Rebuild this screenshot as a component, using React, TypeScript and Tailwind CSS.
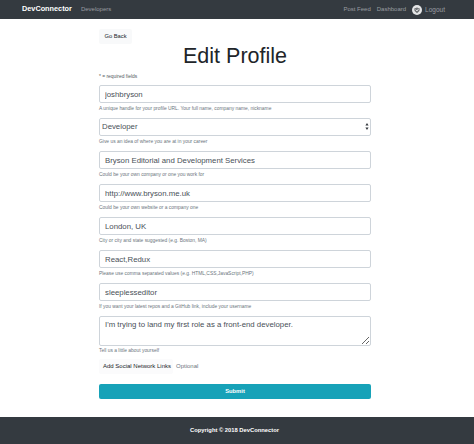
import React from 'react';

const fields = [
  { value: 'Bryson Editorial and Development Services', help: 'Could be your own company or one you work for' },
  { value: 'http://www.bryson.me.uk', help: 'Could be your own website or a company one' },
  { value: 'London, UK', help: 'City or city and state suggested (e.g. Boston, MA)' },
  { value: 'React,Redux', help: 'Please use comma separated values (e.g. HTML,CSS,JavaScript,PHP)' },
  { value: 'sleeplesseditor', help: 'If you want your latest repos and a GitHub link, include your username' },
];

const inputClass =
  'block w-full h-[18px] rounded-[2px] border border-[#ced4da] bg-white px-[5px] text-[7.8px] text-[#495057] outline-none';

const Help: React.FC<{ text: string }> = ({ text }) => (
  <p className="mt-[1px] h-[14px] text-[4.9px] leading-[9px] text-[#6c757d]">{text}</p>
);

const App: React.FC = () => {
  return (
    <div className="flex min-h-[444px] flex-col bg-white font-['Liberation_Sans',Arial,sans-serif] text-[#212529]">
      {/* Navbar */}
      <nav className="flex h-[19px] items-center justify-between bg-[#343a40] pl-[22px] pr-[29px]">
        <div className="flex items-center gap-[9px]">
          <span className="text-[7.3px] font-bold text-white">DevConnector</span>
          <span className="text-[6px] text-[#9a9da1]">Developers</span>
        </div>
        <div className="flex items-center text-[6px] text-[#9a9da1]">
          <span>Post Feed</span>
          <span className="ml-[6px]">Dashboard</span>
          <svg className="ml-[6px]" width="10" height="10" viewBox="0 0 10 10">
            <circle cx="5" cy="5" r="5" fill="#e4e5e6" />
            <path d="M2.2 3.6 L5 2.4 L7.8 3.6 L7.4 6 L5 8.2 L2.6 6 Z" fill="#6f7275" />
            <path d="M3.6 4.6 L5 6 L6.6 3.8" stroke="#e4e5e6" strokeWidth="0.9" fill="none" />
          </svg>
          <span className="ml-[3px] text-[6.5px]">Logout</span>
        </div>
      </nav>

      {/* Form */}
      <main className="ml-[99px] w-[272px] flex-1">
        <button className="mt-[10px] block h-[15px] w-[33px] rounded-[2px] bg-[#f8f9fa] text-[5.8px] text-[#212529]">
          Go Back
        </button>
        <h1 className="mt-[1px] text-center text-[21.5px] leading-[22px] text-[#212529]">Edit Profile</h1>
        <p className="mt-[6px] h-[12px] text-[4.9px] leading-[8px] text-[#555b61]">* = required fields</p>

        <input className={inputClass} defaultValue="joshbryson" readOnly />
        <Help text="A unique handle for your profile URL. Your full name, company name, nickname" />

        <div className="relative">
          <select className={`${inputClass} appearance-none !px-[2px]`} defaultValue="Developer">
            <option>Developer</option>
          </select>
          <svg className="absolute right-[2px] top-[5px]" width="4" height="7" viewBox="0 0 4 7">
            <path d="M2 0 L3.6 2.6 H0.4 Z M2 7 L0.4 4.4 H3.6 Z" fill="#33383d" />
          </svg>
        </div>
        <Help text="Give us an idea of where you are at in your career" />

        {fields.map((field) => (
          <div key={field.help}>
            <input className={inputClass} defaultValue={field.value} readOnly />
            <Help text={field.help} />
          </div>
        ))}

        <textarea
          className="block h-[30px] w-full rounded-[2px] border border-[#ced4da] bg-white px-[5px] py-[3px] text-[7.8px] leading-[10px] text-[#495057] outline-none"
          defaultValue="I'm trying to land my first role as a front-end developer."
          readOnly
        />
        <p className="mt-[1px] text-[4.9px] leading-[8px] text-[#6c757d]">Tell us a little about yourself</p>

        <div className="mt-[4px] flex h-[15px] items-center text-[6px]">
          <button className="h-[15px] rounded-[2px] bg-[#fbfbfc] pl-[4px] pr-[2px] text-[#212529]">
            Add Social Network Links
          </button>
          <span className="ml-[3px] text-[#6c757d]">Optional</span>
        </div>

        <button className="mt-[10px] block h-[15px] w-full rounded-[2px] bg-[#17a2b8] text-[5.8px] font-bold text-white">
          Submit
        </button>
      </main>

      {/* Footer */}
      <footer className="flex h-[27px] items-center justify-center bg-[#343a40] pr-[5px] text-[5.8px] font-bold text-white">
        Copyright © 2018 DevConnector
      </footer>
    </div>
  );
};

export default App;
